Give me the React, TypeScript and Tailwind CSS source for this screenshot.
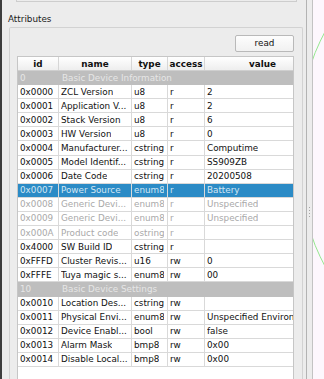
import React from "react";

type Row =
  | { kind: "group"; id: string; name: string }
  | { kind: "item"; cells: string[]; state?: "sel" | "dis" };

const rows: Row[] = [
  { kind: "group", id: "0", name: "Basic Device Information" },
  { kind: "item", cells: ["0x0000", "ZCL Version", "u8", "r", "2"] },
  { kind: "item", cells: ["0x0001", "Application V...", "u8", "r", "2"] },
  { kind: "item", cells: ["0x0002", "Stack Version", "u8", "r", "6"] },
  { kind: "item", cells: ["0x0003", "HW Version", "u8", "r", "0"] },
  { kind: "item", cells: ["0x0004", "Manufacturer...", "cstring", "r", "Computime"] },
  { kind: "item", cells: ["0x0005", "Model Identif...", "cstring", "r", "SS909ZB"] },
  { kind: "item", cells: ["0x0006", "Date Code", "cstring", "r", "20200508"] },
  { kind: "item", cells: ["0x0007", "Power Source", "enum8", "r", "Battery"], state: "sel" },
  { kind: "item", cells: ["0x0008", "Generic Devi...", "enum8", "r", "Unspecified"], state: "dis" },
  { kind: "item", cells: ["0x0009", "Generic Devi...", "enum8", "r", "Unspecified"], state: "dis" },
  { kind: "item", cells: ["0x000A", "Product code", "ostring", "r", ""], state: "dis" },
  { kind: "item", cells: ["0x4000", "SW Build ID", "cstring", "r", ""] },
  { kind: "item", cells: ["0xFFFD", "Cluster Revis...", "u16", "rw", "0"] },
  { kind: "item", cells: ["0xFFFE", "Tuya magic s...", "enum8", "rw", "00"] },
  { kind: "group", id: "10", name: "Basic Device Settings" },
  { kind: "item", cells: ["0x0010", "Location Des...", "cstring", "rw", ""] },
  { kind: "item", cells: ["0x0011", "Physical Envi...", "enum8", "rw", "Unspecified Environment"] },
  { kind: "item", cells: ["0x0012", "Device Enabl...", "bool", "rw", "false"] },
  { kind: "item", cells: ["0x0013", "Alarm Mask", "bmp8", "rw", "0x00"] },
  { kind: "item", cells: ["0x0014", "Disable Local...", "bmp8", "rw", "0x00"] },
];

const W = ["w-[41px]", "w-[73px]", "w-[36px]", "w-[37px]", "w-[116px]"];
const headers = ["id", "name", "type", "access", "value"];

function ItemRow({ cells, state }: { cells: string[]; state?: "sel" | "dis" }) {
  const bg = state === "sel" ? "bg-[#2b8bc6]" : "bg-white";
  const color =
    state === "sel" ? "text-[#d3e6f3]" : state === "dis" ? "text-[#a9a9a9]" : "text-[#111111]";
  return (
    <div className={`flex h-[14.1px] shrink-0 border-b border-[#d9d9d9] ${bg}`}>
      {cells.map((c, i) => (
        <div
          key={i}
          className={`${W[i]} shrink-0 border-r border-[#d9d9d9] pl-[2px] pr-[3px] flex items-center`}
        >
          <div className={`overflow-hidden whitespace-nowrap leading-[12px] ${color}`}>{c}</div>
        </div>
      ))}
    </div>
  );
}

function GroupRow({ id, name }: { id: string; name: string }) {
  return (
    <div className="flex h-[14.1px] shrink-0 bg-[#bebebe] text-[#e6e6e6] items-center">
      <div className="w-[41px] shrink-0 pl-[2px] whitespace-nowrap leading-[12px]">{id}</div>
      <div className="pl-[3px] whitespace-nowrap leading-[12px]">{name}</div>
    </div>
  );
}

export default function App() {
  return (
    <div
      className="w-[324px] h-[379px] flex bg-[#ececec] overflow-hidden text-[8.8px] text-[#111111]"
      style={{ fontFamily: '"DejaVu Sans", "Liberation Sans", sans-serif' }}
    >
      <div className="w-[2px] shrink-0 bg-[#3d3d3d]" />
      <div className="w-[304px] shrink-0 flex flex-col">
        <div className="ml-[14px] w-[281px] h-[2px] shrink-0 border-x border-b border-[#cdcdcd]" />
        <div className="ml-[6px] mt-[12px] h-[11px] leading-[11px] shrink-0 text-[#1a1a1a]">Attributes</div>
        <div className="ml-[7px] mt-[2px] w-[294px] flex-1 min-h-0 border border-b-0 border-[#d2d2d2] rounded-t-[2px] flex flex-col pt-[7px]">
          <div className="flex justify-end pr-[8px] shrink-0">
            <button className="w-[59px] h-[17px] border border-[#b9b9b9] rounded-[2px] bg-gradient-to-b from-[#fdfdfd] to-[#f1f1f1] text-[8.8px] leading-[15px] text-[#111111]">
              read
            </button>
          </div>
          <div className="ml-[7px] mt-[4px] w-[277px] flex-1 min-h-0 border border-b-0 border-[#c6c6c6] bg-white overflow-hidden flex flex-col">
            <div className="flex h-[14px] shrink-0 border-b border-[#cfcfcf] bg-gradient-to-b from-[#ffffff] to-[#eeeeee]">
              {headers.map((h, i) => (
                <div
                  key={h}
                  className={`${W[i]} shrink-0 border-r border-[#d6d6d6] flex items-center justify-center font-bold leading-[12px] text-[#111111]`}
                >
                  {h}
                </div>
              ))}
            </div>
            {rows.map((r, i) =>
              r.kind === "group" ? (
                <GroupRow key={i} id={r.id} name={r.name} />
              ) : (
                <ItemRow key={i} cells={r.cells} state={r.state} />
              )
            )}
          </div>
        </div>
      </div>
      <div className="w-[1px] shrink-0 bg-[#b3b3b3]" />
      <div className="w-[5px] shrink-0 flex flex-col items-center pt-[207px] gap-[2px]">
        <div className="w-[1px] h-[1px] bg-[#a6a6a6]" />
        <div className="w-[1px] h-[1px] bg-[#a6a6a6]" />
        <div className="w-[1px] h-[1px] bg-[#a6a6a6]" />
        <div className="w-[1px] h-[1px] bg-[#a6a6a6]" />
      </div>
      <div className="w-[1px] shrink-0 bg-[#c3c3c3]" />
      <div className="flex-1 bg-[#fdf7fd] relative overflow-hidden">
        <svg className="absolute left-0 top-0" width="11" height="379" viewBox="0 0 11 379">
          <circle cx="235" cy="149" r="252" fill="none" stroke="#94e88e" strokeWidth="1" />
        </svg>
      </div>
    </div>
  );
}
